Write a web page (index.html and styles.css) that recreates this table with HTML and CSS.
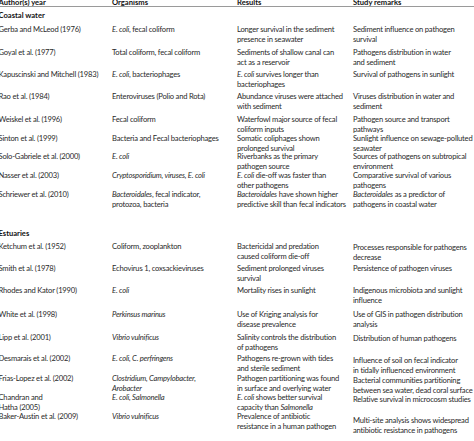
FILE: index.html
```html
<!DOCTYPE html>
<html>
<head>
<meta charset="utf-8">
<link rel="stylesheet" href="styles.css">
</head>
<body>
<div class="table">
  <div class="row head">
    <div class="c">Author(s) year</div><div class="c">Organisms</div><div class="c">Results</div><div class="c">Study remarks</div>
  </div>
  <div class="row section s1"><div class="c">Coastal water</div></div>

  <div class="row h225"><div class="c">Gerba and McLeod (1976)</div><div class="c"><i>E. coli</i>, fecal coliform</div><div class="c">Longer survival in the sediment<br>presence in seawater</div><div class="c">Sediment influence on pathogen<br>survival</div></div>
  <div class="row h22"><div class="c">Goyal et al. (1977)</div><div class="c">Total coliform, fecal coliform</div><div class="c">Sediments of shallow canal can<br>act as a reservoir</div><div class="c">Pathogens distribution in water<br>and sediment</div></div>
  <div class="row h22"><div class="c">Kapuscinski and Mitchell (1983)</div><div class="c"><i>E. coli</i>, bacteriophages</div><div class="c"><i>E. coli</i> survives longer than<br>bacteriophages</div><div class="c">Survival of pathogens in sunlight</div></div>
  <div class="row h23"><div class="c">Rao et al. (1984)</div><div class="c">Enteroviruses (Polio and Rota)</div><div class="c">Abundance viruses were attached<br>with sediment</div><div class="c">Viruses distribution in water and<br>sediment</div></div>
  <div class="row h185"><div class="c">Weiskel et al. (1996)</div><div class="c">Fecal coliform</div><div class="c">Waterfowl major source of fecal<br>coliform inputs</div><div class="c">Pathogen source and transport<br>pathways</div></div>
  <div class="row h185"><div class="c">Sinton et al. (1999)</div><div class="c">Bacteria and Fecal bacteriophages</div><div class="c">Somatic coliphages shown<br>prolonged survival</div><div class="c">Sunlight influence on sewage-polluted<br>seawater</div></div>
  <div class="row h19"><div class="c">Solo-Gabriele et al. (2000)</div><div class="c"><i>E. coli</i></div><div class="c">Riverbanks as the primary<br>pathogen source</div><div class="c">Sources of pathogens on subtropical<br>environment</div></div>
  <div class="row h19"><div class="c">Nasser et al. (2003)</div><div class="c"><i>Cryptosporidium, viruses, E. coli</i></div><div class="c"><i>E. coli</i> die-off was faster than<br>other pathogens</div><div class="c">Comparative survival of various<br>pathogens</div></div>
  <div class="row h385"><div class="c">Schriewer et al. (2010)</div><div class="c"><i>Bacteroidales</i>, fecal indicator,<br>protozoa, bacteria</div><div class="c"><i>Bacteroidales</i> have shown higher<br>predictive skill than fecal indicators</div><div class="c"><i>Bacteroidales</i> as a predictor of<br>pathogens in coastal water</div></div>

  <div class="row section s2"><div class="c">Estuaries</div></div>

  <div class="row h22"><div class="c">Ketchum et al. (1952)</div><div class="c">Coliform, zooplankton</div><div class="c">Bactericidal and predation<br>caused coliform die-off</div><div class="c low1">Processes responsible for pathogens<br>decrease</div></div>
  <div class="row h22"><div class="c">Smith et al. (1978)</div><div class="c">Echovirus 1, coxsackieviruses</div><div class="c">Sediment prolonged viruses<br>survival</div><div class="c">Persistence of pathogen viruses</div></div>
  <div class="row h235"><div class="c">Rhodes and Kator (1990)</div><div class="c"><i>E. coli</i></div><div class="c">Mortality rises in sunlight</div><div class="c">Indigenous microbiota and sunlight<br>influence</div></div>
  <div class="row h23"><div class="c">White et al. (1998)</div><div class="c"><i>Perkinsus marinus</i></div><div class="c">Use of Kriging analysis for<br>disease prevalence</div><div class="c">Use of GIS in pathogen distribution<br>analysis</div></div>
  <div class="row h215"><div class="c">Lipp et al. (2001)</div><div class="c"><i>Vibrio vulnificus</i></div><div class="c">Salinity controls the distribution<br>of pathogens</div><div class="c low1">Distribution of human pathogens</div></div>
  <div class="row h195"><div class="c">Desmarais et al. (2002)</div><div class="c"><i>E. coli, C. perfringens</i></div><div class="c">Pathogens re-grown with tides<br>and sterile sediment</div><div class="c low2">Influence of soil on fecal indicator<br>in tidally influenced environment</div></div>
  <div class="row h195"><div class="c">Frias-Lopez et al. (2002)</div><div class="c"><i>Clostridium, Campylobacter,<br>Arobacter</i></div><div class="c">Pathogen partitioning was found<br>in surface and overlying water</div><div class="c low2">Bacterial communities partitioning<br>between sea water, dead coral surface</div></div>
  <div class="row h19"><div class="c">Chandran and<br>Hatha (2005)</div><div class="c"><i>E. coli, Salmonella</i></div><div class="c"><i>E. coli</i> shows better survival<br>capacity than <i>Salmonella</i></div><div class="c low1">Relative survival in microcosm studies</div></div>
  <div class="row last"><div class="c">Baker-Austin et al. (2009)</div><div class="c"><i>Vibrio vulnificus</i></div><div class="c">Prevalence of antibiotic<br>resistance in a human pathogen</div><div class="c low4">Multi-site analysis shows widespread<br>antibiotic resistance in pathogens</div></div>
</div>
</body>
</html>
```

FILE: styles.css
```css
html, body {
  margin: 0;
  padding: 0;
  background: #fff;
  width: 474px;
  height: 441px;
  overflow: hidden;
}
.table {
  margin-top: -3px;
  margin-left: -1.5px;
  width: 520px;
  font-family: Lato, "Open Sans", sans-serif;
  font-size: 7.6px;
  line-height: 10px;
  letter-spacing: -0.2px;
  color: #2a2a2a;
}
.row {
  display: grid;
  grid-template-columns: 113.5px 125px 116px 1fr;
  white-space: nowrap;
  box-sizing: border-box;
}
.c { overflow: visible; }
.head {
  height: 10px;
  border-bottom: 1px solid #9a9a9a;
  font-weight: 700;
  color: #111;
  letter-spacing: 0;
}
.section {
  font-weight: 700;
  color: #111;
  letter-spacing: 0;
}
.s1 { height: 17px; padding-top: 3px; }
.s2 { height: 13.2px; }
.h185 { height: 18.5px; }
.h19 { height: 19px; }
.h195 { height: 19.5px; }
.h215 { height: 21.5px; }
.h22 { height: 22.3px; }
.h225 { height: 22.5px; }
.h23 { height: 23px; }
.h235 { height: 23.5px; }
.h385 { height: 38.5px; }
.last { height: 30px; }
.low1 { padding-top: 1.5px; }
.low2 { padding-top: 2px; }
.low4 { padding-top: 4px; }
i { font-style: italic; }
```
